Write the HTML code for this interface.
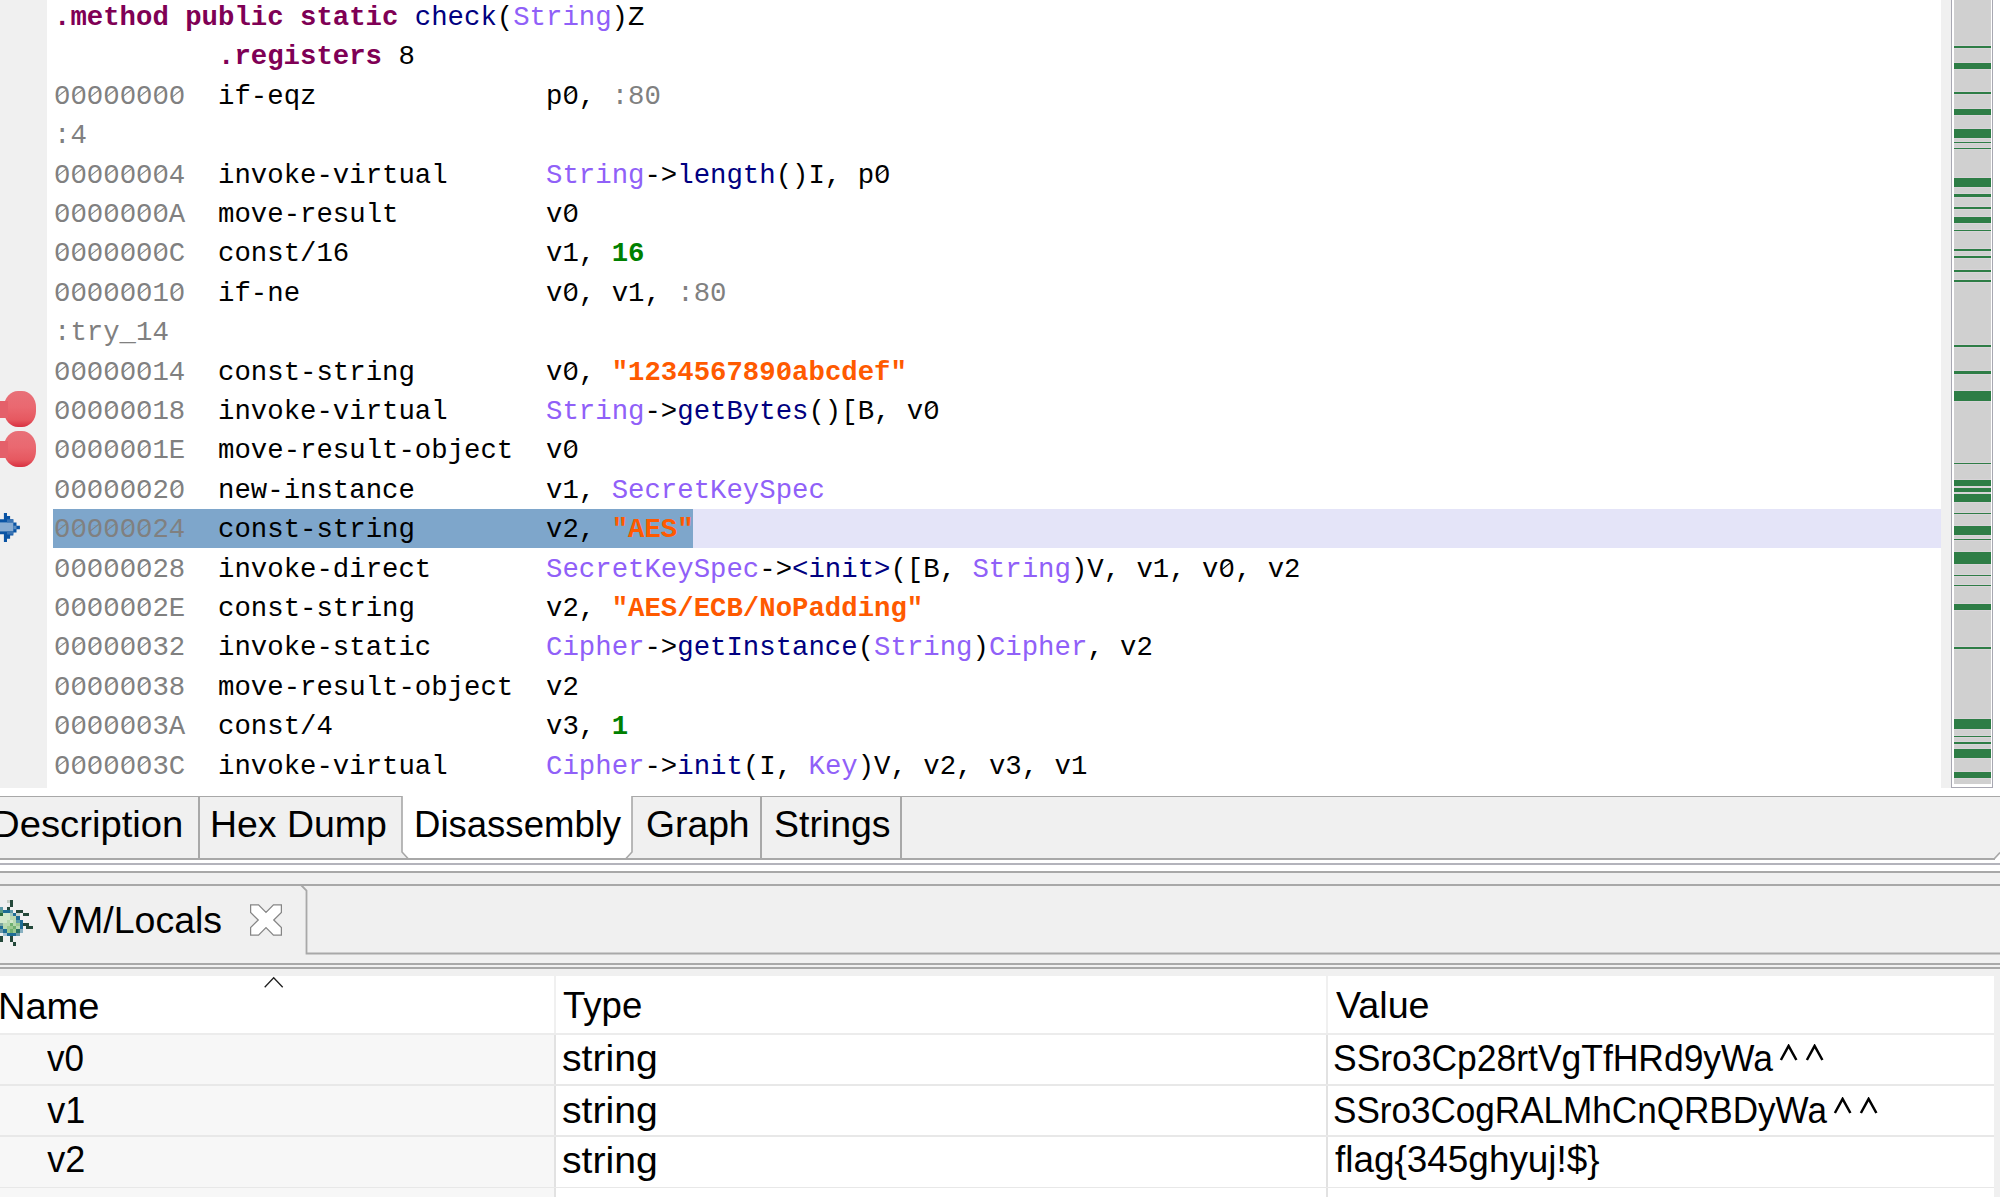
<!DOCTYPE html>
<html><head><meta charset="utf-8">
<style>
html,body{margin:0;padding:0;width:2000px;height:1197px;overflow:hidden;background:#f0f0f0;position:relative}
.abs{position:absolute}
#code{position:absolute;left:0;top:0;width:2000px;height:796px;background:#fff;overflow:hidden}
#gutter{position:absolute;left:0;top:0;width:46.5px;height:788px;background:#f0f0f0}
#strip{position:absolute;left:1941px;top:0;width:11px;height:788px;background:#f0f0f0}
#curline{position:absolute;left:53px;top:509.3px;width:1888px;height:39px;background:#e4e4f8}
#sel{position:absolute;left:53px;top:509.3px;width:640px;height:39px;background:#7ea6cb}
.ln{position:absolute;left:54px;height:39.4px;line-height:39.4px;font-family:"Liberation Mono",monospace;font-size:27.33px;white-space:pre;color:#000}
.z{position:relative}
.z::before{content:"";position:absolute;left:6.3px;top:11.8px;width:4.4px;height:3.8px;background:var(--bg,#fff)}
.z::after{content:"";position:absolute;left:1.8px;top:12.4px;width:11.4px;height:1.25px;background:currentColor;transform:rotate(-38deg)}
.str .z::after{height:2.2px;top:13.5px;left:2.5px;width:10px}
.kw{color:#7f0055;font-weight:bold}
.nm{color:#000080}
.bk{color:#000}
.ty{color:#9060f8}
.ad{color:#808080}
.lb{color:#808080}
.str{color:#ff5a00;font-weight:bold}
.num{color:#008000;font-weight:bold}
#ruler{position:absolute;left:1951.2px;top:-2px;width:40.1px;height:787.5px;border:1.5px solid #a8a8b2;background:#fff}
#rin{position:absolute;left:2.3px;top:0.5px;width:36.1px;height:784.7px;background:#d0d0d0}
.mk{position:absolute;left:0;width:36.1px;background:#2e7d46;box-shadow:0 -1px 0 #d8d4d8,0 1px 0 #d8d4d8}
.bp{position:absolute;left:3.5px;width:32.2px;height:36px;border-radius:14px/16px;background:linear-gradient(#e87078,#ea6870 45%,#e65860 80%,#d83040)}
.ui{font-family:"Liberation Sans",sans-serif;font-size:36px;color:#000;white-space:pre;position:absolute;transform-origin:0 0}
</style></head><body>
<div id="code">
<div id="gutter"></div>
<div id="curline"></div>
<div id="sel"></div>
<div class="bp" style="top:391.1px"></div>
<div class="bp" style="top:430.8px"></div>
<div class="abs" style="left:0;top:401px;width:8px;height:17px;background:#e4606a"></div>
<div class="abs" style="left:0;top:440.5px;width:8px;height:17px;background:#e4606a"></div>
<svg class="abs" style="left:0;top:505px" width="24" height="42" viewBox="0 0 24 42"><path d="M0 14.3 L3.9 14.3 L3.9 7.9 L7 7.9 L7 11 L10.1 11 L10.1 14.3 L13.3 14.3 L13.3 17.5 L16.5 17.5 L16.5 20.7 L19.9 20.7 L19.9 24.2 L16.5 24.2 L16.5 27.4 L13.3 27.4 L13.3 30.6 L10.1 30.6 L10.1 33.8 L7 33.8 L7 37 L3.9 37 L3.9 29.3 L0 29.3 Z" fill="#0a54a4"/><rect x="0" y="17.4" width="13.3" height="9" fill="#88acd2"/><rect x="7" y="14.3" width="6.3" height="3.1" fill="#3a74b4"/><rect x="7" y="26.4" width="6.3" height="3.1" fill="#3a74b4"/><rect x="13.3" y="20.7" width="3.2" height="3.5" fill="#5a8cc0"/></svg>
<div class="ln" style="top:-2.00px"><span class="kw">.method public static </span><span class="nm">check</span><span class="bk">(</span><span class="ty">String</span><span class="bk">)Z</span></div>
<div class="ln" style="top:37.40px">          <span class="kw">.registers</span><span class="bk"> 8</span></div>
<div class="ln" style="top:76.80px"><span class="ad"><span class="z">0</span><span class="z">0</span><span class="z">0</span><span class="z">0</span><span class="z">0</span><span class="z">0</span><span class="z">0</span><span class="z">0</span></span><span class="bk">  if-eqz              p<span class="z">0</span>, </span><span class="lb">:80</span></div>
<div class="ln" style="top:116.20px"><span class="lb">:4</span></div>
<div class="ln" style="top:155.60px"><span class="ad"><span class="z">0</span><span class="z">0</span><span class="z">0</span><span class="z">0</span><span class="z">0</span><span class="z">0</span><span class="z">0</span>4</span><span class="bk">  invoke-virtual      </span><span class="ty">String</span><span class="bk">-></span><span class="nm">length</span><span class="bk">()I, p<span class="z">0</span></span></div>
<div class="ln" style="top:195.00px"><span class="ad"><span class="z">0</span><span class="z">0</span><span class="z">0</span><span class="z">0</span><span class="z">0</span><span class="z">0</span><span class="z">0</span>A</span><span class="bk">  move-result         v<span class="z">0</span></span></div>
<div class="ln" style="top:234.40px"><span class="ad"><span class="z">0</span><span class="z">0</span><span class="z">0</span><span class="z">0</span><span class="z">0</span><span class="z">0</span><span class="z">0</span>C</span><span class="bk">  const/16            v1, </span><span class="num">16</span></div>
<div class="ln" style="top:273.80px"><span class="ad"><span class="z">0</span><span class="z">0</span><span class="z">0</span><span class="z">0</span><span class="z">0</span><span class="z">0</span>1<span class="z">0</span></span><span class="bk">  if-ne               v<span class="z">0</span>, v1, </span><span class="lb">:80</span></div>
<div class="ln" style="top:313.20px"><span class="lb">:try_14</span></div>
<div class="ln" style="top:352.60px"><span class="ad"><span class="z">0</span><span class="z">0</span><span class="z">0</span><span class="z">0</span><span class="z">0</span><span class="z">0</span>14</span><span class="bk">  const-string        v<span class="z">0</span>, </span><span class="str">"123456789<span class="z">0</span>abcdef"</span></div>
<div class="ln" style="top:392.00px"><span class="ad"><span class="z">0</span><span class="z">0</span><span class="z">0</span><span class="z">0</span><span class="z">0</span><span class="z">0</span>18</span><span class="bk">  invoke-virtual      </span><span class="ty">String</span><span class="bk">-></span><span class="nm">getBytes</span><span class="bk">()[B, v<span class="z">0</span></span></div>
<div class="ln" style="top:431.40px"><span class="ad"><span class="z">0</span><span class="z">0</span><span class="z">0</span><span class="z">0</span><span class="z">0</span><span class="z">0</span>1E</span><span class="bk">  move-result-object  v<span class="z">0</span></span></div>
<div class="ln" style="top:470.80px"><span class="ad"><span class="z">0</span><span class="z">0</span><span class="z">0</span><span class="z">0</span><span class="z">0</span><span class="z">0</span>2<span class="z">0</span></span><span class="bk">  new-instance        v1, </span><span class="ty">SecretKeySpec</span></div>
<div class="ln" style="top:510.20px;--bg:#7ea6cb"><span class="ad"><span class="z">0</span><span class="z">0</span><span class="z">0</span><span class="z">0</span><span class="z">0</span><span class="z">0</span>24</span><span class="bk">  const-string        v2, </span><span class="str">"AES"</span></div>
<div class="ln" style="top:549.60px"><span class="ad"><span class="z">0</span><span class="z">0</span><span class="z">0</span><span class="z">0</span><span class="z">0</span><span class="z">0</span>28</span><span class="bk">  invoke-direct       </span><span class="ty">SecretKeySpec</span><span class="bk">-></span><span class="nm">&lt;init&gt;</span><span class="bk">([B, </span><span class="ty">String</span><span class="bk">)V, v1, v<span class="z">0</span>, v2</span></div>
<div class="ln" style="top:589.00px"><span class="ad"><span class="z">0</span><span class="z">0</span><span class="z">0</span><span class="z">0</span><span class="z">0</span><span class="z">0</span>2E</span><span class="bk">  const-string        v2, </span><span class="str">"AES/ECB/NoPadding"</span></div>
<div class="ln" style="top:628.40px"><span class="ad"><span class="z">0</span><span class="z">0</span><span class="z">0</span><span class="z">0</span><span class="z">0</span><span class="z">0</span>32</span><span class="bk">  invoke-static       </span><span class="ty">Cipher</span><span class="bk">-></span><span class="nm">getInstance</span><span class="bk">(</span><span class="ty">String</span><span class="bk">)</span><span class="ty">Cipher</span><span class="bk">, v2</span></div>
<div class="ln" style="top:667.80px"><span class="ad"><span class="z">0</span><span class="z">0</span><span class="z">0</span><span class="z">0</span><span class="z">0</span><span class="z">0</span>38</span><span class="bk">  move-result-object  v2</span></div>
<div class="ln" style="top:707.20px"><span class="ad"><span class="z">0</span><span class="z">0</span><span class="z">0</span><span class="z">0</span><span class="z">0</span><span class="z">0</span>3A</span><span class="bk">  const/4             v3, </span><span class="num">1</span></div>
<div class="ln" style="top:746.60px"><span class="ad"><span class="z">0</span><span class="z">0</span><span class="z">0</span><span class="z">0</span><span class="z">0</span><span class="z">0</span>3C</span><span class="bk">  invoke-virtual      </span><span class="ty">Cipher</span><span class="bk">-></span><span class="nm">init</span><span class="bk">(I, </span><span class="ty">Key</span><span class="bk">)V, v2, v3, v1</span></div>
<div id="strip"></div>
<div id="ruler"><div id="rin">
<div class="mk" style="top:46.0px;height:2.0px"></div>
<div class="mk" style="top:63.0px;height:6.0px"></div>
<div class="mk" style="top:92.0px;height:2.0px"></div>
<div class="mk" style="top:109.0px;height:6.0px"></div>
<div class="mk" style="top:129.0px;height:9.0px"></div>
<div class="mk" style="top:142.0px;height:1.5px"></div>
<div class="mk" style="top:148.0px;height:1.5px"></div>
<div class="mk" style="top:178.0px;height:9.5px"></div>
<div class="mk" style="top:194.0px;height:3.5px"></div>
<div class="mk" style="top:207.0px;height:2.0px"></div>
<div class="mk" style="top:217.5px;height:6.1px"></div>
<div class="mk" style="top:230.0px;height:1.5px"></div>
<div class="mk" style="top:249.5px;height:1.5px"></div>
<div class="mk" style="top:256.5px;height:1.5px"></div>
<div class="mk" style="top:270.0px;height:2.7px"></div>
<div class="mk" style="top:280.0px;height:2.7px"></div>
<div class="mk" style="top:345.5px;height:1.5px"></div>
<div class="mk" style="top:371.6px;height:2.7px"></div>
<div class="mk" style="top:391.0px;height:10.7px"></div>
<div class="mk" style="top:463.0px;height:1.5px"></div>
<div class="mk" style="top:480.2px;height:6.0px"></div>
<div class="mk" style="top:488.6px;height:4.3px"></div>
<div class="mk" style="top:494.9px;height:7.4px"></div>
<div class="mk" style="top:513.0px;height:1.5px"></div>
<div class="mk" style="top:526.3px;height:9.0px"></div>
<div class="mk" style="top:539.0px;height:1.5px"></div>
<div class="mk" style="top:552.0px;height:12.7px"></div>
<div class="mk" style="top:575.0px;height:1.5px"></div>
<div class="mk" style="top:585.0px;height:1.5px"></div>
<div class="mk" style="top:604.8px;height:6.1px"></div>
<div class="mk" style="top:647.5px;height:1.5px"></div>
<div class="mk" style="top:719.8px;height:9.4px"></div>
<div class="mk" style="top:736.3px;height:1.5px"></div>
<div class="mk" style="top:742.7px;height:1.5px"></div>
<div class="mk" style="top:749.2px;height:9.4px"></div>
<div class="mk" style="top:772.0px;height:6.6px"></div>
</div></div>
</div>
<div class="abs" style="left:0;top:796px;width:2000px;height:63px;background:#f0f0f0"></div>
<div class="abs" style="left:0px;top:795.5px;width:2000px;height:1.5px;background:#a8a8a8"></div>
<svg class="abs" style="left:0;top:790px" width="2000" height="80" viewBox="0 790 2000 80"><path d="M402 796 L402 852 L408 858.5 L626 858.5 L632 852 L632 796 Z" fill="#fff"/><path d="M402 796 L402 852 L408 858.5 M626 858.5 L632 852 L632 796" fill="none" stroke="#a8a8a8" stroke-width="1.6"/><path d="M1995 859.5 L2000 853.5 L2000 859.5 Z" fill="#fff"/><path d="M1994.5 858.5 L2000 852.5" fill="none" stroke="#a8a8a8" stroke-width="1.6"/></svg>
<div class="abs" style="left:198px;top:796px;width:1.5px;height:62px;background:#a8a8a8"></div>
<div class="abs" style="left:760px;top:796px;width:1.5px;height:62px;background:#a8a8a8"></div>
<div class="abs" style="left:900px;top:796px;width:1.5px;height:62px;background:#a8a8a8"></div>
<div class="abs" style="left:0;top:859px;width:2000px;height:13px;background:#fff"></div>
<div class="abs" style="left:0px;top:857.5px;width:1995px;height:2px;background:#a8a8a8"></div>
<div class="abs" style="left:0px;top:862.5px;width:2000px;height:2px;background:#b4b4bc"></div>
<div class="abs" style="left:0px;top:870.8px;width:2000px;height:2px;background:#a8a8a8"></div>
<div class="abs" style="left:0px;top:884px;width:2000px;height:2px;background:#a8a8a8"></div>
<svg class="abs" style="left:0;top:880px" width="2000" height="80" viewBox="0 880 2000 80"><path d="M301 885 L306.5 890.5 L306.5 953.5 L2000 953.5" fill="none" stroke="#a8a8a8" stroke-width="1.8"/></svg>
<div class="abs" style="left:0px;top:962.5px;width:2000px;height:2px;background:#a8a8a8"></div>
<div class="abs" style="left:0px;top:966.5px;width:2000px;height:2px;background:#a8a8a8"></div>
<svg class="abs" style="left:0;top:900.3px" width="36" height="48" viewBox="0 0 36 48" shape-rendering="crispEdges"><rect x="9.78" y="0.00" width="3.31" height="3.31" fill="#24483a"/><rect x="6.52" y="0.00" width="3.31" height="3.31" fill="#c8d0c8"/><rect x="9.78" y="3.26" width="3.31" height="3.31" fill="#24483a"/><rect x="0.00" y="6.52" width="3.31" height="3.31" fill="#5a9aa8"/><rect x="6.52" y="6.52" width="3.31" height="3.31" fill="#24483a"/><rect x="0.00" y="9.78" width="3.31" height="3.31" fill="#5a9a80"/><rect x="3.26" y="9.78" width="3.31" height="3.31" fill="#1e6c94"/><rect x="6.52" y="9.78" width="3.31" height="3.31" fill="#1e6c94"/><rect x="9.78" y="9.78" width="3.31" height="3.31" fill="#5a9aa8"/><rect x="16.30" y="9.78" width="3.31" height="3.31" fill="#24483a"/><rect x="19.56" y="9.78" width="3.31" height="3.31" fill="#24483a"/><rect x="0.00" y="13.04" width="3.31" height="3.31" fill="#2a6a40"/><rect x="3.26" y="13.04" width="3.31" height="3.31" fill="#d4e8cc"/><rect x="6.52" y="13.04" width="3.31" height="3.31" fill="#d4e8cc"/><rect x="9.78" y="13.04" width="3.31" height="3.31" fill="#a0c8c0"/><rect x="13.04" y="13.04" width="3.31" height="3.31" fill="#1e6c94"/><rect x="16.30" y="13.04" width="3.31" height="3.31" fill="#c8d4cc"/><rect x="22.82" y="13.04" width="3.31" height="3.31" fill="#24483a"/><rect x="26.08" y="13.04" width="3.31" height="3.31" fill="#24483a"/><rect x="0.00" y="16.30" width="3.31" height="3.31" fill="#d4e8cc"/><rect x="3.26" y="16.30" width="3.31" height="3.31" fill="#d4e8cc"/><rect x="6.52" y="16.30" width="3.31" height="3.31" fill="#d4e8cc"/><rect x="9.78" y="16.30" width="3.31" height="3.31" fill="#b8d8b0"/><rect x="13.04" y="16.30" width="3.31" height="3.31" fill="#b8d8b0"/><rect x="16.30" y="16.30" width="3.31" height="3.31" fill="#1e6c94"/><rect x="0.00" y="19.56" width="3.31" height="3.31" fill="#d4e8cc"/><rect x="3.26" y="19.56" width="3.31" height="3.31" fill="#d4e8cc"/><rect x="6.52" y="19.56" width="3.31" height="3.31" fill="#b8d8b0"/><rect x="9.78" y="19.56" width="3.31" height="3.31" fill="#d4e8cc"/><rect x="13.04" y="19.56" width="3.31" height="3.31" fill="#b8d8b0"/><rect x="16.30" y="19.56" width="3.31" height="3.31" fill="#5a9aa8"/><rect x="19.56" y="19.56" width="3.31" height="3.31" fill="#1e6c94"/><rect x="0.00" y="22.82" width="3.31" height="3.31" fill="#80a8a0"/><rect x="3.26" y="22.82" width="3.31" height="3.31" fill="#b8d8b0"/><rect x="6.52" y="22.82" width="3.31" height="3.31" fill="#b8d8b0"/><rect x="9.78" y="22.82" width="3.31" height="3.31" fill="#70b070"/><rect x="13.04" y="22.82" width="3.31" height="3.31" fill="#b8d8b0"/><rect x="16.30" y="22.82" width="3.31" height="3.31" fill="#9cc890"/><rect x="19.56" y="22.82" width="3.31" height="3.31" fill="#1e6c94"/><rect x="22.82" y="22.82" width="3.31" height="3.31" fill="#24483a"/><rect x="26.08" y="22.82" width="3.31" height="3.31" fill="#24483a"/><rect x="0.00" y="26.08" width="3.31" height="3.31" fill="#1e6c94"/><rect x="3.26" y="26.08" width="3.31" height="3.31" fill="#b8d8b0"/><rect x="6.52" y="26.08" width="3.31" height="3.31" fill="#9cc890"/><rect x="9.78" y="26.08" width="3.31" height="3.31" fill="#9cc890"/><rect x="13.04" y="26.08" width="3.31" height="3.31" fill="#70b070"/><rect x="16.30" y="26.08" width="3.31" height="3.31" fill="#b8d8b0"/><rect x="19.56" y="26.08" width="3.31" height="3.31" fill="#1e6c94"/><rect x="26.08" y="26.08" width="3.31" height="3.31" fill="#24483a"/><rect x="29.34" y="26.08" width="3.31" height="3.31" fill="#24483a"/><rect x="0.00" y="29.34" width="3.31" height="3.31" fill="#6a98a8"/><rect x="3.26" y="29.34" width="3.31" height="3.31" fill="#1e6c94"/><rect x="6.52" y="29.34" width="3.31" height="3.31" fill="#9cc890"/><rect x="9.78" y="29.34" width="3.31" height="3.31" fill="#70b070"/><rect x="13.04" y="29.34" width="3.31" height="3.31" fill="#9cc890"/><rect x="16.30" y="29.34" width="3.31" height="3.31" fill="#2a7060"/><rect x="19.56" y="29.34" width="3.31" height="3.31" fill="#88b0c0"/><rect x="3.26" y="32.60" width="3.31" height="3.31" fill="#a0c0d0"/><rect x="6.52" y="32.60" width="3.31" height="3.31" fill="#1e6c94"/><rect x="9.78" y="32.60" width="3.31" height="3.31" fill="#1e6c94"/><rect x="13.04" y="32.60" width="3.31" height="3.31" fill="#1e6c94"/><rect x="16.30" y="32.60" width="3.31" height="3.31" fill="#6a9aa8"/><rect x="0.00" y="35.86" width="3.31" height="3.31" fill="#24483a"/><rect x="9.78" y="35.86" width="3.31" height="3.31" fill="#24483a"/><rect x="0.00" y="39.12" width="3.31" height="3.31" fill="#24483a"/><rect x="9.78" y="39.12" width="3.31" height="3.31" fill="#24483a"/><rect x="13.04" y="42.38" width="3.31" height="3.31" fill="#24483a"/></svg>
<svg class="abs" style="left:250px;top:903.6px" width="32" height="32" viewBox="-0.6 -0.6 32.6 32.2">
<path d="M0 0 L8.1 0 L15.7 7.8 L23.3 0 L31.4 0 L31.4 7.8 L23.6 15.5 L31.4 23.2 L31.4 31 L23.3 31 L15.7 23.2 L8.1 31 L0 31 L0 23.2 L7.8 15.5 L0 7.8 Z" fill="#fff" stroke="#858585" stroke-width="1.3" stroke-linejoin="miter"/>
</svg>
<!-- table -->
<div class="abs" style="left:0;top:975.5px;width:1994px;height:222px;background:#fff"></div>
<div class="abs" style="left:0;top:1034px;width:555px;height:163px;background:#f7f7f7"></div>
<div class="abs" style="left:554px;top:975px;width:1.5px;height:59px;background:#f0f0f0"></div>
<div class="abs" style="left:1326px;top:975px;width:1.5px;height:59px;background:#f0f0f0"></div>
<div class="abs" style="left:554px;top:1034px;width:1.5px;height:163px;background:#e2e2e2"></div>
<div class="abs" style="left:1326px;top:1034px;width:1.5px;height:163px;background:#e2e2e2"></div>
<div class="abs" style="left:0;top:1033px;width:1994px;height:1.5px;background:#ececec"></div>
<div class="abs" style="left:0;top:1084.2px;width:1994px;height:1.5px;background:#e8e8e8"></div>
<div class="abs" style="left:0;top:1135.3px;width:1994px;height:1.5px;background:#e8e8e8"></div>
<div class="abs" style="left:0;top:1186.5px;width:1994px;height:1.5px;background:#e8e8e8"></div>
<svg class="abs" style="left:262px;top:975px" width="24" height="16" viewBox="0 975 24 16">
<path d="M2.7 987.2 L11.7 977.8 L20.7 987.2" fill="none" stroke="#202020" stroke-width="1.3"/></svg>
<div class="ui" style="left:-7.69px;top:804.30px;transform:scaleX(1.0629)">Description</div>
<div class="ui" style="left:209.88px;top:804.30px;transform:scaleX(1.0392)">Hex Dump</div>
<div class="ui" style="left:413.71px;top:804.30px;transform:scaleX(1.0149)">Disassembly</div>
<div class="ui" style="left:646.13px;top:804.30px;transform:scaleX(1.0354)">Graph</div>
<div class="ui" style="left:774.22px;top:804.30px;transform:scaleX(1.0404)">Strings</div>
<div class="ui" style="left:47.00px;top:900.00px;transform:scaleX(1.0419)">VM/Locals</div>
<div class="ui" style="left:-2.17px;top:985.50px;transform:scaleX(1.0565)">Name</div>
<div class="ui" style="left:563.38px;top:985.10px;transform:scaleX(1.0158)">Type</div>
<div class="ui" style="left:1335.80px;top:984.70px;transform:scaleX(1.0466)">Value</div>
<div class="ui" style="left:47.20px;top:1037.50px;transform:scaleX(0.9730)">v0</div>
<div class="ui" style="left:47.20px;top:1089.80px;transform:scaleX(1.0000)">v1</div>
<div class="ui" style="left:47.20px;top:1139.00px;transform:scaleX(1.0000)">v2</div>
<div class="ui" style="left:562.41px;top:1038.10px;transform:scaleX(1.0882)">string</div>
<div class="ui" style="left:562.41px;top:1090.20px;transform:scaleX(1.0882)">string</div>
<div class="ui" style="left:562.41px;top:1139.60px;transform:scaleX(1.0882)">string</div>
<div class="ui" style="left:1333.43px;top:1037.90px;transform:scaleX(0.9845)">SSro3Cp28rtVgTfHRd9yWa</div>
<div class="ui" style="left:1333.45px;top:1090.00px;transform:scaleX(0.9745)">SSro3CogRALMhCnQRBDyWa</div>
<div class="ui" style="left:1335.40px;top:1139.10px;transform:scaleX(1.0248)">flag{345ghyuj!$}</div>
<svg class="abs" style="left:1779px;top:1043.5px" width="20" height="18" viewBox="-1 -1 20 18"><path d="M0.9 15 L8.6 0.9 L16.4 15" fill="none" stroke="#000" stroke-width="2.5" stroke-linejoin="miter"/></svg><svg class="abs" style="left:1805px;top:1043.5px" width="20" height="18" viewBox="-1 -1 20 18"><path d="M0.9 15 L8.6 0.9 L16.4 15" fill="none" stroke="#000" stroke-width="2.5" stroke-linejoin="miter"/></svg><svg class="abs" style="left:1833px;top:1096.5px" width="20" height="18" viewBox="-1 -1 20 18"><path d="M0.9 15 L8.6 0.9 L16.4 15" fill="none" stroke="#000" stroke-width="2.5" stroke-linejoin="miter"/></svg><svg class="abs" style="left:1859px;top:1096.5px" width="20" height="18" viewBox="-1 -1 20 18"><path d="M0.9 15 L8.6 0.9 L16.4 15" fill="none" stroke="#000" stroke-width="2.5" stroke-linejoin="miter"/></svg>
</body></html>
